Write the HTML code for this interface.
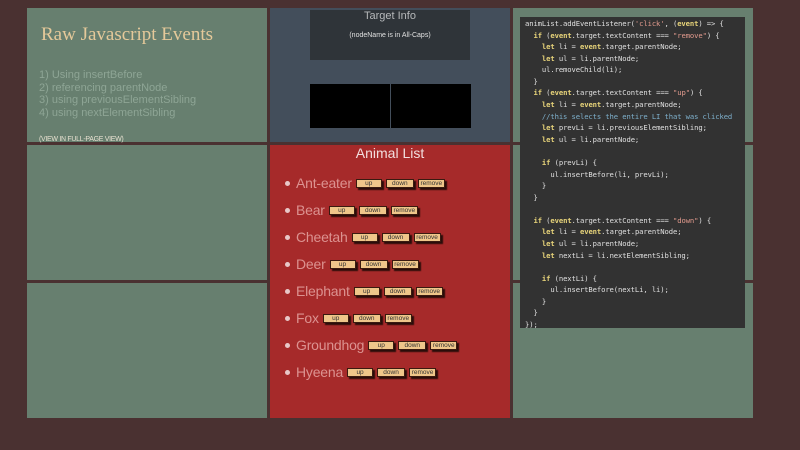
<!DOCTYPE html>
<html><head><style>
*{margin:0;padding:0;box-sizing:border-box}
body{width:800px;height:450px;background:#4a3131;position:relative;overflow:hidden;font-family:"Liberation Sans",sans-serif}
.p{position:absolute;background:#677f6f}
#a{left:27px;top:8px;width:240px;height:134px}
#b{left:270px;top:8px;width:240px;height:134px;background:#434e5b}
#c{left:513px;top:8px;width:240px;height:134px}
#d{left:27px;top:145px;width:240px;height:135px}
#e{left:270px;top:145px;width:240px;height:273px;background:#a62a2a}
#f{left:513px;top:145px;width:240px;height:135px}
#g{left:27px;top:283px;width:240px;height:135px}
#h{left:513px;top:283px;width:240px;height:135px}
h1{position:absolute;left:14px;top:16px;font:19px "Liberation Serif",serif;color:#e5c99a;font-weight:normal}
.ol{position:absolute;left:12px;top:61px;font-size:11px;line-height:12.6px;color:#8ea595}
.vw{position:absolute;left:12px;top:128px;font-size:7px;color:#e6e0d0;letter-spacing:-.3px}
.ti{position:absolute;left:40px;top:2px;width:160px;height:50px;background:#2f3439;color:#b6b8ba;text-align:center}
.bk{position:absolute;top:76px;width:80px;height:44px;background:#000}
.al{position:absolute;left:0;width:240px;top:0;text-align:center;color:#f2dede;font-size:14px}
.li{position:absolute;left:25px;color:#dc9290;font-size:14px;font-weight:300;display:flex;align-items:center;white-space:nowrap;letter-spacing:-.2px}
.li:before{content:"";width:5px;height:5px;border-radius:50%;background:#e8c8c8;margin-right:6px;margin-left:-10px}
.bt{display:inline-block;background:#efc68a;border:1px solid #3a1a10;box-shadow:2px 2px 1px #2a0d0a;font-size:6.5px;color:#333;height:9px;line-height:7px;text-align:center;margin-left:4px;font-weight:normal;letter-spacing:0}
.code{position:absolute;left:520px;top:17px;width:225px;height:311px;background:#323232;font:7.2px/11.58px "DejaVu Sans Mono",monospace;color:#e0e0e0;padding:1px 0 0 5px;white-space:pre;letter-spacing:-.1px}
.k{color:#e8d47a;font-weight:bold}.s{color:#e39b8e}.cm{color:#7eb0cc}
</style></head><body>
<div class="p" id="a"><h1>Raw Javascript Events</h1>
<div class="ol">1) Using insertBefore<br>2) referencing parentNode<br>3) using previousElementSibling<br>4) using nextElementSibling</div>
<div class="vw">(VIEW IN FULL-PAGE VIEW)</div></div>
<div class="p" id="b"><div class="ti"><div style="font-size:11px;margin-top:0">Target Info</div><div style="font-size:7px;color:#e0e0e0;margin-top:10px">(nodeName is in All-Caps)</div></div>
<div class="bk" style="left:40px"></div><div class="bk" style="left:121px"></div></div>
<div class="p" id="c"></div><div class="p" id="d"></div><div class="p" id="f"></div><div class="p" id="g"></div><div class="p" id="h"></div>
<div class="p" id="e"><div class="al">Animal List</div>
<div class="li" style="top:30px">Ant-eater<span class="bt" style="width:26px">up</span><span class="bt" style="width:28px">down</span><span class="bt" style="width:27px">remove</span></div>
<div class="li" style="top:57px">Bear<span class="bt" style="width:26px">up</span><span class="bt" style="width:28px">down</span><span class="bt" style="width:27px">remove</span></div>
<div class="li" style="top:84px">Cheetah<span class="bt" style="width:26px">up</span><span class="bt" style="width:28px">down</span><span class="bt" style="width:27px">remove</span></div>
<div class="li" style="top:111px">Deer<span class="bt" style="width:26px">up</span><span class="bt" style="width:28px">down</span><span class="bt" style="width:27px">remove</span></div>
<div class="li" style="top:138px">Elephant<span class="bt" style="width:26px">up</span><span class="bt" style="width:28px">down</span><span class="bt" style="width:27px">remove</span></div>
<div class="li" style="top:165px">Fox<span class="bt" style="width:26px">up</span><span class="bt" style="width:28px">down</span><span class="bt" style="width:27px">remove</span></div>
<div class="li" style="top:192px">Groundhog<span class="bt" style="width:26px">up</span><span class="bt" style="width:28px">down</span><span class="bt" style="width:27px">remove</span></div>
<div class="li" style="top:219px">Hyeena<span class="bt" style="width:26px">up</span><span class="bt" style="width:28px">down</span><span class="bt" style="width:27px">remove</span></div>
</div>
<div class="code">animList.addEventListener(<span class="s">'click'</span>, (<span class="k">event</span>) => {
  <span class="k">if</span> (<span class="k">event</span>.target.textContent === <span class="s">"remove"</span>) {
    <span class="k">let</span> li = <span class="k">event</span>.target.parentNode;
    <span class="k">let</span> ul = li.parentNode;
    ul.removeChild(li);
  }
  <span class="k">if</span> (<span class="k">event</span>.target.textContent === <span class="s">"up"</span>) {
    <span class="k">let</span> li = <span class="k">event</span>.target.parentNode;
    <span class="cm">//this selects the entire LI that was clicked</span>
    <span class="k">let</span> prevLi = li.previousElementSibling;
    <span class="k">let</span> ul = li.parentNode;

    <span class="k">if</span> (prevLi) {
      ul.insertBefore(li, prevLi);
    }
  }

  <span class="k">if</span> (<span class="k">event</span>.target.textContent === <span class="s">"down"</span>) {
    <span class="k">let</span> li = <span class="k">event</span>.target.parentNode;
    <span class="k">let</span> ul = li.parentNode;
    <span class="k">let</span> nextLi = li.nextElementSibling;

    <span class="k">if</span> (nextLi) {
      ul.insertBefore(nextLi, li);
    }
  }
});</div>
</body></html>
